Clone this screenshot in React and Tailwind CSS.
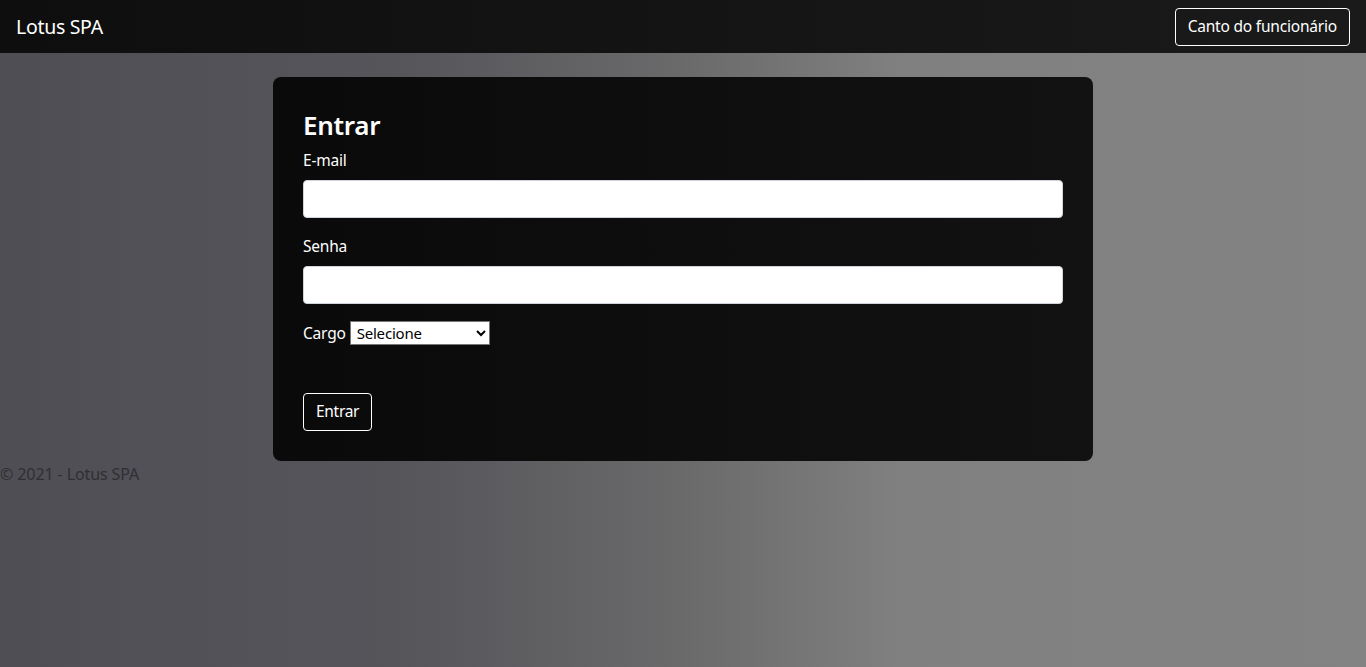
import React from "react";

const App = () => {
  return (
    <div
      className="min-h-screen flex flex-col bg-[linear-gradient(90deg,#4f4e55_0%,#55555a_29%,#6a6a6b_50%,#808080_66%,#838383_100%)] text-white"
      style={{ fontFamily: '"Noto Sans", "Open Sans", sans-serif' }}
    >
      <nav className="h-[53px] flex items-center justify-between pl-4 pr-4 bg-[linear-gradient(90deg,#0e0e0e,#1a1a1a)] shrink-0">
        <a className="text-[19.5px] text-white tracking-[-0.3px]">Lotus SPA</a>
        <button className="h-[38px] px-3 rounded-[4px] border border-white text-[15.5px] text-white tracking-[-0.2px]">
          Canto do funcionário
        </button>
      </nav>

      <main className="flex justify-center pt-6">
        <div className="w-[820px] rounded-[8px] bg-[linear-gradient(90deg,#0a0a0a,#121212)] px-[30px] pt-[30px] pb-[30px]">
          <h2 className="text-[26px] font-semibold leading-[36px] mb-[5px] tracking-[-0.3px]">Entrar</h2>
          <form className="flex flex-col">
            <label className="text-[15.5px] leading-[24px] mb-2 tracking-[-0.2px]">E-mail</label>
            <input className="h-[38px] w-full rounded-[4px] border border-[#ced4da] bg-white" />
            <label className="text-[15.5px] leading-[24px] mt-4 mb-2 tracking-[-0.2px]">Senha</label>
            <input
              type="password"
              className="h-[38px] w-full rounded-[4px] border border-[#ced4da] bg-white"
            />
            <div className="flex items-center mt-[17px]">
              <label className="text-[15.5px] leading-[24px] mr-[4px] tracking-[-0.2px]">Cargo</label>
              <select className="w-[140px] h-[24px] bg-white text-black text-[15px] border border-[#767676] rounded-none pl-[2px] tracking-[-0.2px]">
                <option>Selecione</option>
              </select>
            </div>
            <div className="mt-[48px]">
              <button
                type="button"
                className="h-[38px] px-3 rounded-[4px] border border-white text-[15.5px] text-white tracking-[-0.3px]"
              >
                Entrar
              </button>
            </div>
          </form>
        </div>
      </main>

      <footer className="text-[16px] text-[#2f2f33] leading-[24px] pt-[1px] tracking-[-0.1px]">
        © 2021 - Lotus SPA
      </footer>
    </div>
  );
};

export default App;
